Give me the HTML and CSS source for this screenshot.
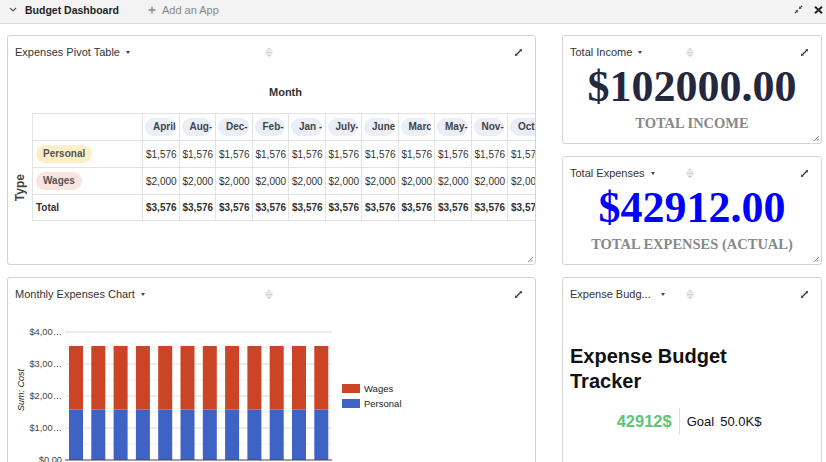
FILE: index.html
```html
<!DOCTYPE html>
<html lang="en">
<head>
    <meta charset="UTF-8">
    <meta name="viewport" content="width=device-width, initial-scale=1.0">
    <title>Budget Dashboard</title>
    <link rel="stylesheet" href="styles.css">
</head>
<body>
    <div class="topbar">
        <div class="tb-left">
            <svg class="chevron" width="8" height="5" viewBox="0 0 8 5"><path d="M1 1 L4 4 L7 1" fill="none" stroke="#555" stroke-width="1.2"/></svg>
            <span class="dash-name">Budget Dashboard</span>
            <span class="add-app">
                <svg width="8" height="8" viewBox="0 0 8 8"><path d="M4 0.5 V7.5 M0.5 4 H7.5" stroke="#888" stroke-width="1.4"/></svg>
                Add an App
            </span>
        </div>
        <div class="tb-right">
            <svg width="9" height="9" viewBox="0 0 10 10">
                <path d="M1 9 L3 7 M9 1 L7 3" stroke="#333" stroke-width="1.3"/>
                <polygon points="4.5,5.5 4,8.5 1.5,6" fill="#333"/>
                <polygon points="5.5,4.5 6,1.5 8.5,4" fill="#333"/>
            </svg>
            <svg width="9" height="8" viewBox="0 0 9 8"><path d="M1 0.8 L8 7.2 M8 0.8 L1 7.2" stroke="#222" stroke-width="2"/></svg>
        </div>
    </div>

    <main class="board">
        <!-- pivot table -->
        <section class="card pivot-card">
            <div class="card-head">
                <div class="card-title">Expenses Pivot Table <span class="caret"></span></div>
                <svg class="handle" width="8" height="10" viewBox="0 0 8 10"><polygon points="4,0.5 6.5,2.5 1.5,2.5"/><rect x="0.5" y="3.5" width="7" height="0.9"/><rect x="0.5" y="5" width="7" height="0.9"/><rect x="0.5" y="6.5" width="7" height="0.9"/><polygon points="1.5,8 6.5,8 4,10"/></svg>
                <svg class="expand" width="9" height="9" viewBox="0 0 10 10"><path d="M2.5 7.5 L7.5 2.5" stroke="#333" stroke-width="1.3"/><polygon points="9,1 8.4,4.1 5.9,1.6" fill="#333"/><polygon points="1,9 4.1,8.4 1.6,5.9" fill="#333"/></svg>
            </div>
            <div class="pivot-body">
                <div class="type-col"><span class="type-label">Type</span></div>
                <div class="pivot-wrap">
                    <div class="pivot-title">Month</div>
                    <table class="pivot">
                        <colgroup>
                            <col class="c-type">
                            <col><col><col><col><col><col><col><col><col><col><col>
                        </colgroup>
                        <thead>
                            <tr>
                                <th></th>
                                <th><span class="month-pill">April</span></th>
                                <th><span class="month-pill">Aug-</span></th>
                                <th><span class="month-pill">Dec-</span></th>
                                <th><span class="month-pill">Feb-</span></th>
                                <th><span class="month-pill">Jan -</span></th>
                                <th><span class="month-pill">July-</span></th>
                                <th><span class="month-pill">June</span></th>
                                <th><span class="month-pill">Marc</span></th>
                                <th><span class="month-pill">May-</span></th>
                                <th><span class="month-pill">Nov-</span></th>
                                <th><span class="month-pill">Oct</span></th>
                            </tr>
                        </thead>
                        <tbody>
                            <tr>
                                <td><span class="type-pill personal">Personal</span></td>
                                <td>$1,576</td><td>$1,576</td><td>$1,576</td><td>$1,576</td><td>$1,576</td><td>$1,576</td>
                                <td>$1,576</td><td>$1,576</td><td>$1,576</td><td>$1,576</td><td>$1,576</td>
                            </tr>
                            <tr>
                                <td><span class="type-pill wages">Wages</span></td>
                                <td>$2,000</td><td>$2,000</td><td>$2,000</td><td>$2,000</td><td>$2,000</td><td>$2,000</td>
                                <td>$2,000</td><td>$2,000</td><td>$2,000</td><td>$2,000</td><td>$2,000</td>
                            </tr>
                            <tr class="total">
                                <td>Total</td>
                                <td>$3,576</td><td>$3,576</td><td>$3,576</td><td>$3,576</td><td>$3,576</td><td>$3,576</td>
                                <td>$3,576</td><td>$3,576</td><td>$3,576</td><td>$3,576</td><td>$3,576</td>
                            </tr>
                        </tbody>
                    </table>
                </div>
            </div>
            <svg class="resize" width="5" height="5" viewBox="0 0 5 5"><path d="M5 0 L0 5 M5 2.5 L2.5 5" stroke="#777" stroke-width="0.8"/></svg>
        </section>

        <!-- total income -->
        <section class="card kpi">
            <div class="card-head">
                <div class="card-title">Total Income <span class="caret"></span></div>
                <svg class="handle" width="8" height="10" viewBox="0 0 8 10"><polygon points="4,0.5 6.5,2.5 1.5,2.5"/><rect x="0.5" y="3.5" width="7" height="0.9"/><rect x="0.5" y="5" width="7" height="0.9"/><rect x="0.5" y="6.5" width="7" height="0.9"/><polygon points="1.5,8 6.5,8 4,10"/></svg>
                <svg class="expand" width="9" height="9" viewBox="0 0 10 10"><path d="M2.5 7.5 L7.5 2.5" stroke="#333" stroke-width="1.3"/><polygon points="9,1 8.4,4.1 5.9,1.6" fill="#333"/><polygon points="1,9 4.1,8.4 1.6,5.9" fill="#333"/></svg>
            </div>
            <div class="kpi-value income">$102000.00</div>
            <div class="kpi-label">TOTAL INCOME</div>
            <svg class="resize" width="5" height="5" viewBox="0 0 5 5"><path d="M5 0 L0 5 M5 2.5 L2.5 5" stroke="#777" stroke-width="0.8"/></svg>
        </section>

        <!-- total expenses -->
        <section class="card kpi">
            <div class="card-head">
                <div class="card-title">Total Expenses <span class="caret"></span></div>
                <svg class="handle" width="8" height="10" viewBox="0 0 8 10"><polygon points="4,0.5 6.5,2.5 1.5,2.5"/><rect x="0.5" y="3.5" width="7" height="0.9"/><rect x="0.5" y="5" width="7" height="0.9"/><rect x="0.5" y="6.5" width="7" height="0.9"/><polygon points="1.5,8 6.5,8 4,10"/></svg>
                <svg class="expand" width="9" height="9" viewBox="0 0 10 10"><path d="M2.5 7.5 L7.5 2.5" stroke="#333" stroke-width="1.3"/><polygon points="9,1 8.4,4.1 5.9,1.6" fill="#333"/><polygon points="1,9 4.1,8.4 1.6,5.9" fill="#333"/></svg>
            </div>
            <div class="kpi-value expenses">$42912.00</div>
            <div class="kpi-label">TOTAL EXPENSES (ACTUAL)</div>
            <svg class="resize" width="5" height="5" viewBox="0 0 5 5"><path d="M5 0 L0 5 M5 2.5 L2.5 5" stroke="#777" stroke-width="0.8"/></svg>
        </section>

        <!-- chart -->
        <section class="card chart-card">
            <div class="card-head">
                <div class="card-title">Monthly Expenses Chart <span class="caret"></span></div>
                <svg class="handle" width="8" height="10" viewBox="0 0 8 10"><polygon points="4,0.5 6.5,2.5 1.5,2.5"/><rect x="0.5" y="3.5" width="7" height="0.9"/><rect x="0.5" y="5" width="7" height="0.9"/><rect x="0.5" y="6.5" width="7" height="0.9"/><polygon points="1.5,8 6.5,8 4,10"/></svg>
                <svg class="expand" width="9" height="9" viewBox="0 0 10 10"><path d="M2.5 7.5 L7.5 2.5" stroke="#333" stroke-width="1.3"/><polygon points="9,1 8.4,4.1 5.9,1.6" fill="#333"/><polygon points="1,9 4.1,8.4 1.6,5.9" fill="#333"/></svg>
            </div>
            <svg class="chart" width="527" height="200" viewBox="0 0 527 200">
                <g class="minor">
                    <line x1="57" y1="44" x2="324" y2="44"/>
                    <line x1="57" y1="76" x2="324" y2="76"/>
                    <line x1="57" y1="108" x2="324" y2="108"/>
                    <line x1="57" y1="140" x2="324" y2="140"/>
                </g>
                <g class="major">
                    <line x1="57" y1="28" x2="324" y2="28"/>
                    <line x1="57" y1="60" x2="324" y2="60"/>
                    <line x1="57" y1="92" x2="324" y2="92"/>
                    <line x1="57" y1="124" x2="324" y2="124"/>
                </g>
                <g class="ylabels">
                    <text x="54" y="31">$4,00…</text>
                    <text x="54" y="63">$3,00…</text>
                    <text x="54" y="95">$2,00…</text>
                    <text x="54" y="127">$1,00…</text>
                    <text x="54" y="159">$0.00</text>
                </g>
                <text class="axis-title" transform="translate(15.5 86) rotate(-90)">Sum: Cost</text>
                <g class="wages">
                    <rect x="61" y="42" width="14" height="63.6"/>
                    <rect x="83.3" y="42" width="14" height="63.6"/>
                    <rect x="105.6" y="42" width="14" height="63.6"/>
                    <rect x="127.9" y="42" width="14" height="63.6"/>
                    <rect x="150.2" y="42" width="14" height="63.6"/>
                    <rect x="172.5" y="42" width="14" height="63.6"/>
                    <rect x="194.8" y="42" width="14" height="63.6"/>
                    <rect x="217.1" y="42" width="14" height="63.6"/>
                    <rect x="239.4" y="42" width="14" height="63.6"/>
                    <rect x="261.7" y="42" width="14" height="63.6"/>
                    <rect x="284" y="42" width="14" height="63.6"/>
                    <rect x="306.3" y="42" width="14" height="63.6"/>
                </g>
                <g class="personal">
                    <rect x="61" y="105.6" width="14" height="50.4"/>
                    <rect x="83.3" y="105.6" width="14" height="50.4"/>
                    <rect x="105.6" y="105.6" width="14" height="50.4"/>
                    <rect x="127.9" y="105.6" width="14" height="50.4"/>
                    <rect x="150.2" y="105.6" width="14" height="50.4"/>
                    <rect x="172.5" y="105.6" width="14" height="50.4"/>
                    <rect x="194.8" y="105.6" width="14" height="50.4"/>
                    <rect x="217.1" y="105.6" width="14" height="50.4"/>
                    <rect x="239.4" y="105.6" width="14" height="50.4"/>
                    <rect x="261.7" y="105.6" width="14" height="50.4"/>
                    <rect x="284" y="105.6" width="14" height="50.4"/>
                    <rect x="306.3" y="105.6" width="14" height="50.4"/>
                </g>
                <line class="baseline" x1="57" y1="156" x2="324" y2="156"/>
                <rect class="sw-wages" x="334" y="80" width="18" height="9"/>
                <text class="legend" x="356" y="87.5">Wages</text>
                <rect class="sw-personal" x="334" y="95" width="18" height="9"/>
                <text class="legend" x="356" y="103">Personal</text>
            </svg>
        </section>

        <!-- budget tracker -->
        <section class="card budget-card">
            <div class="card-head">
                <div class="card-title">Expense Budg... <span class="caret wide"></span></div>
                <svg class="handle" width="8" height="10" viewBox="0 0 8 10"><polygon points="4,0.5 6.5,2.5 1.5,2.5"/><rect x="0.5" y="3.5" width="7" height="0.9"/><rect x="0.5" y="5" width="7" height="0.9"/><rect x="0.5" y="6.5" width="7" height="0.9"/><polygon points="1.5,8 6.5,8 4,10"/></svg>
                <svg class="expand" width="9" height="9" viewBox="0 0 10 10"><path d="M2.5 7.5 L7.5 2.5" stroke="#333" stroke-width="1.3"/><polygon points="9,1 8.4,4.1 5.9,1.6" fill="#333"/><polygon points="1,9 4.1,8.4 1.6,5.9" fill="#333"/></svg>
            </div>
            <div class="budget-body">
                <h2 class="budget-title">Expense Budget<br>Tracker</h2>
                <div class="budget-stats">
                    <span class="actual">42912$</span>
                    <span class="divider"></span>
                    <span class="goal">Goal</span>
                    <span class="goal">50.0K$</span>
                </div>
            </div>
        </section>
    </main>
</body>
</html>
```

FILE: styles.css
```css
body {
    margin: 0;
    font-family: "Liberation Sans", Arial, sans-serif;
    background-color: #fff;
    color: #333;
}

/* top bar */
.topbar {
    height: 24px;
    box-sizing: border-box;
    display: flex;
    justify-content: space-between;
    align-items: flex-start;
    padding: 3px 3px 0 9px;
    background-color: #f3f3f3;
    border-bottom: 1px solid #dadada;
}

.tb-left {
    display: flex;
    align-items: center;
    height: 13px;
}

.chevron {
    margin-right: 8px;
}

.dash-name {
    font-size: 10.5px;
    font-weight: bold;
    color: #222;
}

.add-app {
    display: flex;
    align-items: center;
    gap: 6px;
    margin-left: 29px;
    font-size: 11px;
    color: #888;
}

.tb-right {
    display: flex;
    align-items: center;
    gap: 11px;
    height: 13px;
}

/* board grid */
.board {
    display: grid;
    grid-template-columns: 529px 260px;
    grid-template-rows: 109px 109px 229px;
    gap: 12px 26px;
    padding: 11px 0 0 7px;
}

.card {
    position: relative;
    box-sizing: border-box;
    border: 1px solid #d3d3d3;
    border-radius: 3px;
    background-color: #fff;
    overflow: hidden;
}

.pivot-card {
    grid-row: 1 / span 2;
}

.card-head {
    display: grid;
    grid-template-columns: 1fr auto 1fr;
    align-items: center;
    height: 26px;
    box-sizing: border-box;
    padding: 9px 12px 3px 7px;
}

.card-title {
    font-size: 11px;
    line-height: 14px;
    color: #333;
    white-space: nowrap;
    display: flex;
    align-items: center;
}

.caret {
    display: inline-block;
    margin-left: 6px;
    border-left: 2.5px solid transparent;
    border-right: 2.5px solid transparent;
    border-top: 3px solid #444;
}

.caret.wide {
    margin-left: 10px;
}

.handle {
    fill: #cfcfcf;
}

.expand {
    justify-self: end;
}

.resize {
    position: absolute;
    right: 2px;
    bottom: 2px;
}

/* pivot */
.pivot-body {
    display: flex;
}

.type-col {
    width: 24px;
    flex: none;
    display: flex;
    justify-content: center;
    align-items: flex-start;
    padding-top: 112px;
}

.type-label {
    writing-mode: vertical-rl;
    transform: rotate(180deg);
    font-size: 12px;
    font-weight: bold;
    color: #444;
}

.pivot-wrap {
    flex: 1;
    overflow: hidden;
}

.pivot-title {
    margin: 23px 0 14px;
    padding-left: 4px;
    line-height: 14px;
    text-align: center;
    font-size: 11px;
    font-weight: bold;
    color: #333;
}

.pivot {
    width: 511.5px;
    table-layout: fixed;
    border-collapse: collapse;
    font-size: 10px;
    color: #333;
}

.pivot col {
    width: 36.5px;
}

.pivot col.c-type {
    width: 110px;
}

.pivot th,
.pivot td {
    height: 26px;
    padding: 0;
    border: 1px solid #e3e3e3;
    text-align: left;
    white-space: nowrap;
    overflow: hidden;
}

.pivot td {
    padding-left: 3px;
}

.pivot .total td {
    height: 25px;
    font-weight: bold;
}

.month-pill {
    display: block;
    margin: 0 3px 0 2px;
    height: 18px;
    line-height: 18px;
    padding-left: 8px;
    border-radius: 9px;
    background-color: #e9eef7;
    font-weight: bold;
    color: #444;
    overflow: hidden;
    white-space: nowrap;
}

.type-pill {
    display: inline-block;
    height: 18px;
    line-height: 18px;
    padding: 0 7px;
    border-radius: 9px;
    font-weight: bold;
    color: #555;
}

.type-pill.personal {
    background-color: #fcefc6;
}

.type-pill.wages {
    background-color: #f9e4df;
}

/* kpi cards */
.kpi-value {
    margin-top: 3px;
    font-family: "Liberation Serif", "Times New Roman", serif;
    font-size: 44px;
    font-weight: bold;
    line-height: 44px;
    text-align: center;
}

.kpi-value.income {
    color: #25273e;
}

.kpi-value.expenses {
    color: #0000ff;
}

.kpi-label {
    margin-top: 5px;
    font-family: "Liberation Serif", "Times New Roman", serif;
    font-size: 14.5px;
    font-weight: bold;
    line-height: 18px;
    text-align: center;
    color: #888;
}

/* chart */
.chart {
    display: block;
    font-family: "Liberation Sans", Arial, sans-serif;
}

.chart .major line {
    stroke: #dcdcdc;
    stroke-width: 1;
}

.chart .minor line {
    stroke: #f1f1f1;
    stroke-width: 1;
}

.chart .baseline {
    stroke: #444;
    stroke-width: 1.2;
}

.chart .ylabels text {
    font-size: 9.3px;
    fill: #444;
    text-anchor: end;
}

.chart .axis-title {
    font-size: 9px;
    font-style: italic;
    fill: #222;
    text-anchor: middle;
}

.chart .wages rect,
.chart .sw-wages {
    fill: #cc4426;
}

.chart .personal rect,
.chart .sw-personal {
    fill: #3e63c5;
}

.chart .legend {
    font-size: 9.5px;
    fill: #222;
}

/* budget tracker */
.budget-body {
    padding: 40px 7px 0;
}

.budget-title {
    margin: 0;
    font-size: 20px;
    line-height: 25px;
    font-weight: bold;
    color: #111;
}

.budget-stats {
    display: flex;
    justify-content: center;
    align-items: center;
    margin-top: 14px;
    height: 27px;
}

.actual {
    font-size: 16.5px;
    font-weight: bold;
    color: #5cc47b;
}

.divider {
    width: 1px;
    height: 27px;
    margin: 0 7px;
    background-color: #c9ecd4;
}

.goal {
    font-size: 13px;
    color: #111;
    margin-right: 6px;
}
```
